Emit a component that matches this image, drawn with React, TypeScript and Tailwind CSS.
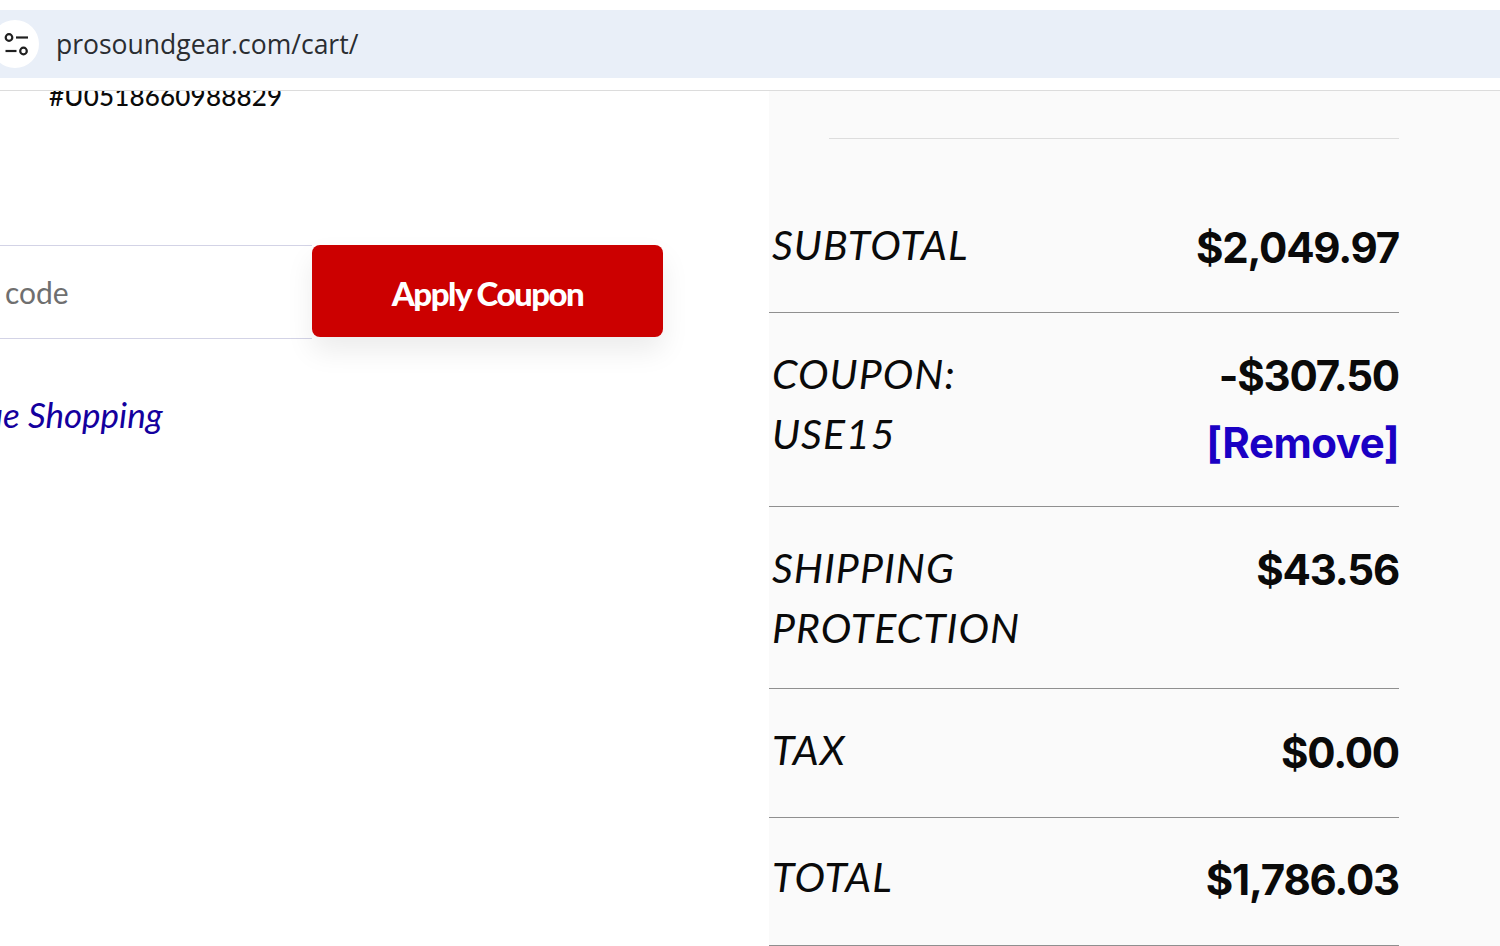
const LATO = "font-['Lato',sans-serif]";

function TuneIcon() {
  return (
    <svg width="26" height="26" viewBox="0 0 26 26" fill="none" stroke="#1f1f1f" strokeWidth="2.2">
      <circle cx="5" cy="6.5" r="3.3" />
      <path d="M12 6.5h12" />
      <path d="M1.5 20h11" />
      <circle cx="19.5" cy="20" r="3.3" />
    </svg>
  );
}

function SummaryRow({
  labels,
  amount,
  height,
  remove,
  labelTop,
  amountTop,
}: {
  labels: string[];
  amount: string;
  height: string;
  remove?: boolean;
  labelTop: string;
  amountTop: string;
}) {
  return (
    <div className={`flex justify-between border-b border-[#8f8f8f] ${height}`}>
      <div className={`pl-[3px] ${labelTop}`}>
        {labels.map((label) => (
          <div key={label} className="h-[60px] text-[41px] leading-[60px] tracking-[1px] italic text-[#0a0a0a]">
            {label}
          </div>
        ))}
      </div>
      <div className={`flex flex-col items-end ${amountTop}`}>
        <div className="h-[60px] font-['Inter',sans-serif] text-[42px] leading-[60px] tracking-[-1.2px] font-bold text-[#0a0a0a]">
          {amount}
        </div>
        {remove && (
          <div className="mt-[7px] font-['Inter',sans-serif] text-[42px] leading-[60px] tracking-[-0.5px] font-bold text-[#1a00c4]">
            [Remove]
          </div>
        )}
      </div>
    </div>
  );
}

export default function App() {
  return (
    <div className={`h-[946px] w-[1500px] overflow-hidden bg-white ${LATO}`}>
      <div className="flex h-[91px] items-start border-b border-[#dcdcdc] bg-white pt-[10px]">
        <div className="flex h-[68px] w-full items-center overflow-hidden bg-[#e9eff8]">
          <div className="ml-[-9px] flex h-[48px] w-[48px] shrink-0 items-center justify-center rounded-full bg-white pl-[4px]">
            <TuneIcon />
          </div>
          <span className="ml-[17px] pt-[2px] font-['Open_Sans',sans-serif] text-[26.5px] text-[#2a2d31]">prosoundgear.com/cart/</span>
        </div>
      </div>

      <div className="flex h-[855px] overflow-hidden">
        <div className="w-[769px] shrink-0 overflow-hidden bg-white">
          <div className="ml-[49px] mt-[-15px] h-[40px] text-[26px] font-medium leading-[40px] tracking-[0.2px] text-[#0a0a0a]">
            #U0518660988829
          </div>
          <div className="mt-[129px] flex h-[94px] w-[663px] items-start">
            <div className="flex h-[94px] flex-1 items-center border-y border-[#d3d3e6] pl-[5px] text-[30px] text-[#6f6f6f]">
              code
            </div>
            <button
              type="button"
              className="h-[92px] w-[351px] rounded-[8px] bg-[#cc0000] pt-[5px] text-[33px] font-black tracking-[-1.5px] text-white shadow-[0_14px_28px_rgba(0,0,0,0.08)]"
            >
              Apply Coupon
            </button>
          </div>
          <div className="ml-[-112px] mt-[49px] text-[35px] italic text-[#14009e]">Continue Shopping</div>
        </div>

        <div className="flex-1 bg-[#fafafa]">
          <div className="w-[630px]">
            <div className="ml-[60px] mt-[47px] border-b border-[#dddddd]" />
            <SummaryRow labels={['SUBTOTAL']} amount="$2,049.97" height="h-[174px]" labelTop="pt-[76px]" amountTop="pt-[79px]" />
            <SummaryRow
              labels={['COUPON:', 'USE15']}
              amount="-$307.50"
              height="h-[194px]"
              remove
              labelTop="pt-[31px]"
              amountTop="pt-[33px]"
            />
            <SummaryRow
              labels={['SHIPPING', 'PROTECTION']}
              amount="$43.56"
              height="h-[182px]"
              labelTop="pt-[31px]"
              amountTop="pt-[33px]"
            />
            <SummaryRow labels={['TAX']} amount="$0.00" height="h-[129px]" labelTop="pt-[31px]" amountTop="pt-[34px]" />
            <SummaryRow labels={['TOTAL']} amount="$1,786.03" height="h-[128px]" labelTop="pt-[29px]" amountTop="pt-[32px]" />
          </div>
        </div>
      </div>
    </div>
  );
}
